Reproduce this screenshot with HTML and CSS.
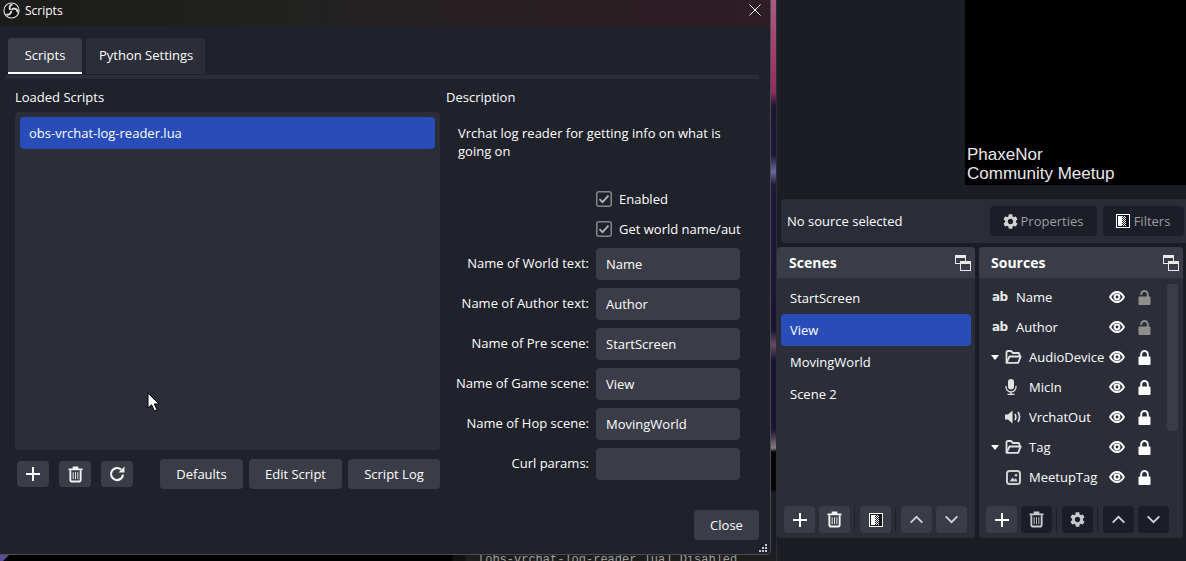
FILE: index.html

```html
<!DOCTYPE html>
<html lang="en">
<head>
    <meta charset="UTF-8">
    <title>Scripts</title>
    <link rel="stylesheet" href="styles.css">
</head>
<body>
    <svg class="sprite" width="0" height="0">
        <defs>
            <pattern id="dither" width="2" height="2" patternUnits="userSpaceOnUse">
                <rect width="2" height="2" fill="#15161c"/>
                <path d="M0 0h1v1H0zM1 1h1v1H1z" fill="#fff"/>
            </pattern>
        </defs>
        <symbol id="i-plus" viewBox="0 0 16 16"><path d="M8 1v14M1 8h14" fill="none" stroke="currentColor" stroke-width="2"/></symbol>
        <symbol id="i-trash" viewBox="0 0 16 17"><path d="M5 1h6M.5 3h15" fill="none" stroke="currentColor" stroke-width="2"/><path d="M2.5 4v10a2 2 0 0 0 2 2h7a2 2 0 0 0 2-2V4" fill="none" stroke="currentColor" stroke-width="2"/><path d="M5.5 6v7.5M8 6v7.5M10.5 6v7.5" fill="none" stroke="currentColor" stroke-width="1"/></symbol>
        <symbol id="i-reload" viewBox="0 0 16 16"><path d="M14 8.6a6 6 0 1 1-1.9-5" fill="none" stroke="currentColor" stroke-width="2.2"/><path d="M15.5 .5v6h-6z" fill="currentColor"/></symbol>
        <symbol id="i-mixer" viewBox="0 0 14 14"><rect x=".5" y=".5" width="13" height="13" fill="#15161c" stroke="#fff"/><rect x="2" y="2" width="4" height="10" fill="#fff"/><rect x="6" y="2" width="4" height="10" fill="url(#dither)"/></symbol>
        <symbol id="i-dock" viewBox="0 0 16 16"><rect x=".5" y=".5" width="10" height="8" fill="none" stroke="currentColor"/><path d="M0 1h11v2H0z" fill="currentColor"/><rect x="5.5" y="6.5" width="10" height="9" fill="#3a3d48" stroke="currentColor"/><path d="M5 7h11v2H5z" fill="currentColor"/></symbol>
        <symbol id="i-gear" viewBox="2 2 20 20"><path fill="currentColor" d="M19.14 12.94c.04-.3.06-.61.06-.94 0-.32-.02-.64-.07-.94l2.03-1.58c.18-.14.23-.41.12-.61l-1.92-3.32c-.12-.22-.37-.29-.59-.22l-2.39.96c-.5-.38-1.03-.7-1.62-.94l-.36-2.54c-.04-.24-.24-.41-.48-.41h-3.84c-.24 0-.43.17-.47.41l-.36 2.54c-.59.24-1.13.57-1.62.94l-2.39-.96c-.22-.08-.47 0-.59.22L2.74 8.87c-.12.21-.08.47.12.61l2.03 1.58c-.05.3-.09.63-.09.94s.02.64.07.94l-2.03 1.58c-.18.14-.23.41-.12.61l1.92 3.32c.12.22.37.29.59.22l2.39-.96c.5.38 1.03.7 1.62.94l.36 2.54c.05.24.24.41.48.41h3.84c.24 0 .44-.17.47-.41l.36-2.54c.59-.24 1.13-.56 1.62-.94l2.39.96c.22.08.47 0 .59-.22l1.92-3.32c.12-.22.07-.47-.12-.61l-2.01-1.58zM12 15.6c-1.98 0-3.6-1.62-3.6-3.6s1.62-3.6 3.6-3.6 3.6 1.62 3.6 3.6-1.62 3.6-3.6 3.6z"/></symbol>
        <symbol id="i-up" viewBox="0 0 16 10"><path d="M1.5 8.5L8 2l6.5 6.5" fill="none" stroke="currentColor" stroke-width="2"/></symbol>
        <symbol id="i-down" viewBox="0 0 16 10"><path d="M1.5 1.5L8 8l6.5-6.5" fill="none" stroke="currentColor" stroke-width="2"/></symbol>
        <symbol id="i-eye" viewBox="0 0 16 12"><path d="M1.1 6c2-3.4 4.4-5 6.9-5s4.900 1.600 6.900 5c-2 3.400-4.400 5-6.900 5s-4.900-1.600-6.900-5z" fill="none" stroke="currentColor" stroke-width="2"/><circle cx="8" cy="6" r="2.4" fill="none" stroke="currentColor" stroke-width="2"/></symbol>
        <symbol id="i-lock" viewBox="0 0 13 15"><path d="M3.200 7V4.300a3.300 3.300 0 0 1 6.600 0V7" fill="none" stroke="currentColor" stroke-width="1.900"/><rect x=".5" y="6.500" width="12" height="8.500" rx="1" fill="currentColor"/></symbol>
        <symbol id="i-unlock" viewBox="0 0 13 15"><path d="M9.800 7V4.300a3.300 3.300 0 0 0-6.600 0V5" fill="none" stroke="currentColor" stroke-width="1.900"/><rect x=".5" y="6.500" width="12" height="8.500" rx="1" fill="currentColor"/></symbol>
        <symbol id="i-folder" viewBox="0 0 17 14"><path d="M1.500 12.500V2.500a1.500 1.500 0 0 1 1.500-1.500h3l2 2h5a1.500 1.500 0 0 1 1.500 1.500V6" fill="none" stroke="currentColor" stroke-width="1.800"/><path d="M1.500 12.800L4.500 6.500h11.200l-2.600 6.300z" fill="none" stroke="currentColor" stroke-width="1.800" stroke-linejoin="round"/></symbol>
        <symbol id="i-caret" viewBox="0 0 8 5"><path d="M0 0h8L4 5z" fill="currentColor"/></symbol>
        <symbol id="i-mic" viewBox="0 0 12 16"><rect x="3" y="0" width="6" height="10.500" rx="3" fill="currentColor"/><path d="M1 7v1a5 5 0 0 0 10 0V7M6 13v2M2.500 15.300h7" fill="none" stroke="currentColor" stroke-width="1.300"/></symbol>
        <symbol id="i-speaker" viewBox="0 0 16 14"><path d="M0 4.500h3L7.500 .5v13L3 9.500H0z" fill="currentColor"/><path d="M10 4c1 1.800 1 4.200 0 6M13 2c1.800 3 1.800 7 0 10" fill="none" stroke="currentColor" stroke-width="1.600"/></symbol>
        <symbol id="i-image" viewBox="0 0 15 15"><rect x="1" y="1" width="13" height="13" rx="2.500" fill="none" stroke="currentColor" stroke-width="2"/><path d="M3.500 11.500l3-4 2 2 1.500-1.200 1.500 3.200z" fill="currentColor"/><circle cx="10" cy="5.200" r="1.300" fill="currentColor"/></symbol>
        <symbol id="i-check" viewBox="0 0 16 16"><rect x=".75" y=".75" width="14.500" height="14.500" rx="2" fill="none" stroke="#85868c" stroke-width="1.500"/><path d="M3.500 8.200l3 3 6-6.500" fill="none" stroke="#b4b5b9" stroke-width="1.800"/></symbol>
    </svg>

    <div class="log"><div class="log-line">[obs-vrchat-log-reader.lua] Disabled</div></div>

    <div class="main-window">
        <div class="preview">
            <div class="preview-text">PhaxeNor<br>Community Meetup</div>
        </div>
        <div class="context-bar">
            <span class="context-label">No source selected</span>
            <button class="context-btn props"><svg class="ic-gear"><use href="#i-gear"/></svg>Properties</button>
            <button class="context-btn filters"><svg class="ic-mixer"><use href="#i-mixer"/></svg>Filters</button>
        </div>
        <div class="docks">
            <section class="dock scenes">
                <header class="dock-head">Scenes<svg class="ic-dock"><use href="#i-dock"/></svg></header>
                <ul class="scene-list">
                    <li>StartScreen</li>
                    <li class="selected">View</li>
                    <li>MovingWorld</li>
                    <li>Scene 2</li>
                </ul>
                <div class="toolbar">
                    <button class="tool"><svg class="ic-plus"><use href="#i-plus"/></svg></button>
                    <button class="tool"><svg class="ic-trash"><use href="#i-trash"/></svg></button>
                    <span class="sep"></span>
                    <button class="tool"><svg class="ic-mixer"><use href="#i-mixer"/></svg></button>
                    <span class="sep"></span>
                    <button class="tool"><svg class="ic-chev"><use href="#i-up"/></svg></button>
                    <button class="tool"><svg class="ic-chev"><use href="#i-down"/></svg></button>
                </div>
            </section>
            <section class="dock sources">
                <header class="dock-head">Sources<svg class="ic-dock"><use href="#i-dock"/></svg></header>
                <div class="source-body">
                    <ul class="source-list">
                        <li class="top"><span class="ab">ab</span><span class="name">Name</span><svg class="ic-eye"><use href="#i-eye"/></svg><svg class="ic-lock soft"><use href="#i-unlock"/></svg></li>
                        <li class="top"><span class="ab">ab</span><span class="name">Author</span><svg class="ic-eye"><use href="#i-eye"/></svg><svg class="ic-lock soft"><use href="#i-unlock"/></svg></li>
                        <li class="group"><svg class="ic-caret"><use href="#i-caret"/></svg><svg class="ic-folder"><use href="#i-folder"/></svg><span class="name">AudioDevice</span><svg class="ic-eye"><use href="#i-eye"/></svg><svg class="ic-lock"><use href="#i-lock"/></svg></li>
                        <li class="child"><svg class="ic-mic"><use href="#i-mic"/></svg><span class="name">MicIn</span><svg class="ic-eye"><use href="#i-eye"/></svg><svg class="ic-lock"><use href="#i-lock"/></svg></li>
                        <li class="child"><svg class="ic-speaker"><use href="#i-speaker"/></svg><span class="name">VrchatOut</span><svg class="ic-eye"><use href="#i-eye"/></svg><svg class="ic-lock"><use href="#i-lock"/></svg></li>
                        <li class="group"><svg class="ic-caret"><use href="#i-caret"/></svg><svg class="ic-folder"><use href="#i-folder"/></svg><span class="name">Tag</span><svg class="ic-eye"><use href="#i-eye"/></svg><svg class="ic-lock"><use href="#i-lock"/></svg></li>
                        <li class="child"><svg class="ic-image"><use href="#i-image"/></svg><span class="name">MeetupTag</span><svg class="ic-eye"><use href="#i-eye"/></svg><svg class="ic-lock"><use href="#i-lock"/></svg></li>
                    </ul>
                    <div class="scrollbar"></div>
                </div>
                <div class="toolbar">
                    <button class="tool"><svg class="ic-plus"><use href="#i-plus"/></svg></button>
                    <button class="tool dark"><svg class="ic-trash"><use href="#i-trash"/></svg></button>
                    <span class="sep"></span>
                    <button class="tool dark"><svg class="ic-gear-lg"><use href="#i-gear"/></svg></button>
                    <span class="sep"></span>
                    <button class="tool dark"><svg class="ic-chev"><use href="#i-up"/></svg></button>
                    <button class="tool dark"><svg class="ic-chev"><use href="#i-down"/></svg></button>
                </div>
            </section>
        </div>
    </div>

    <div class="dialog">
        <div class="titlebar">
            <svg class="obs-logo" viewBox="0 0 18 18">
                <circle cx="9" cy="9" r="8" fill="#111" stroke="#e0e0e0" stroke-width="1.200"/>
                <path d="M10 2.600a3.400 3.400 0 0 0-2 5.800M15.200 11.200a3.400 3.400 0 0 0-6-2.900M3.600 13a3.400 3.400 0 0 0 5-3.500" fill="none" stroke="#e0e0e0" stroke-width="2"/>
            </svg>
            <span class="title">Scripts</span>
            <svg class="close-x" viewBox="0 0 12 12"><path d="M.5 .5l11 11M11.500 .5l-11 11" stroke="#fff" stroke-width="1" fill="none"/></svg>
        </div>

        <div class="tabs">
            <div class="tab active">Scripts</div>
            <div class="tab">Python Settings</div>
        </div>
        <div class="tab-line"></div>

        <div class="panes">
            <div class="left-pane">
                <div class="pane-label">Loaded Scripts</div>
                <div class="script-list">
                    <div class="script-item">obs-vrchat-log-reader.lua</div>
                </div>
                <div class="script-actions">
                    <button class="icon-btn"><svg class="ic-plus"><use href="#i-plus"/></svg></button>
                    <button class="icon-btn"><svg class="ic-trash"><use href="#i-trash"/></svg></button>
                    <button class="icon-btn"><svg class="ic-reload"><use href="#i-reload"/></svg></button>
                    <button class="text-btn defaults">Defaults</button>
                    <button class="text-btn edit">Edit Script</button>
                    <button class="text-btn log-btn">Script Log</button>
                </div>
            </div>
            <div class="right-pane">
                <div class="pane-label">Description</div>
                <p class="description">Vrchat log reader for getting info on what is going on</p>
                <div class="form">
                    <span></span>
                    <label class="check"><svg class="ic-check"><use href="#i-check"/></svg><span>Enabled</span></label>
                    <span></span>
                    <label class="check"><svg class="ic-check"><use href="#i-check"/></svg><span>Get world name/aut</span></label>
                    <label class="field-label">Name of World text:</label>
                    <div class="field">Name</div>
                    <label class="field-label">Name of Author text:</label>
                    <div class="field">Author</div>
                    <label class="field-label">Name of Pre scene:</label>
                    <div class="field">StartScreen</div>
                    <label class="field-label">Name of Game scene:</label>
                    <div class="field">View</div>
                    <label class="field-label">Name of Hop scene:</label>
                    <div class="field">MovingWorld</div>
                    <label class="field-label">Curl params:</label>
                    <div class="field"></div>
                </div>
            </div>
        </div>

        <div class="dialog-foot">
            <button class="text-btn close-btn">Close</button>
        </div>
        <svg class="grip" viewBox="0 0 8 8">
            <path d="M6 0h2v2H6zM3 3h2v2H3zM6 3h2v2H6zM0 6h2v2H0zM3 6h2v2H3zM6 6h2v2H6z" fill="#c9c9cc"/>
        </svg>
    </div>

    <svg class="cursor" viewBox="0 0 13 20">
        <path d="M1 1v15l3.600-3.200L7.400 19l2.600-1.200-2.700-5.800H12z" fill="#fff" stroke="#000" stroke-width="1"/>
    </svg>
</body>
</html>
```

FILE: styles.css

```css
* {
    box-sizing: border-box;
}
html, body {
    margin: 0;
    height: 100%;
}
body {
    position: relative;
    width: 1186px;
    height: 561px;
    overflow: hidden;
    font-family: "Open Sans", sans-serif;
    font-size: 13px;
    color: #fefefe;
    background: linear-gradient(180deg, #a85c85 0, #a23a6a 60px, #8e2f5e 92px, #1a1530 106px, #1c1836 155px, #6a6aa0 172px, #1c1836 185px, #1a1530 330px, #6a4a66 345px, #1a1530 360px, #1a1530 430px, #8d7a80 448px, #060606 452px, #060606 490px, #1b1d25 492px);
}
button {
    font: inherit;
    color: inherit;
    border: none;
    padding: 0;
}
ul {
    list-style: none;
    margin: 0;
    padding: 0;
}
svg {
    display: block;
    flex: none;
}
.sprite {
    position: absolute;
}

/* windows behind the dialog */
.log {
    position: absolute;
    left: 0;
    top: 555px;
    width: 776px;
    height: 6px;
    overflow: hidden;
    background: linear-gradient(135deg, #5b4b92 0, #5b4b92 6px, transparent 7px), linear-gradient(90deg, #000 452px, #111 453px, #111 465px, #1e1e1e 466px);
}
.log-line {
    margin: -2px 0 0 478px;
    font: 12px/14px "Liberation Mono", monospace;
    color: #a0a0a0;
    white-space: pre;
}
.main-window {
    position: absolute;
    left: 776px;
    top: 0;
    width: 410px;
    height: 561px;
    display: flex;
    flex-direction: column;
    background: #1b1d25;
    border-left: 1px solid #2c2e36;
}
.preview {
    height: 185px;
    margin-left: 188px;
    padding: 145px 0 0 2px;
    background: #000;
    flex: none;
}
.preview-text {
    font: 17px/19px "Liberation Sans", sans-serif;
    color: #e8e8e8;
    white-space: nowrap;
}
.context-bar {
    display: flex;
    align-items: center;
    height: 44px;
    margin: 14px 0 0 4px;
    padding: 0 2px 0 6px;
    background: #2a2d37;
    border-radius: 4px 0 0 4px;
}
.context-label {
    flex: 1;
}
.context-btn {
    display: flex;
    align-items: center;
    justify-content: center;
    height: 30px;
    background: #1c1e27;
    border-radius: 4px;
    color: #9a9ca3;
}
.props {
    width: 107px;
    gap: 3px;
    padding-right: 1px;
    margin-right: 6px;
}
.filters {
    width: 81px;
    gap: 4px;
    padding-right: 1px;
}
.ic-gear {
    width: 15px;
    height: 15px;
    color: #d2d2d2;
}
.ic-mixer {
    width: 14px;
    height: 14px;
}
.docks {
    display: flex;
    gap: 4px;
    height: 291px;
    margin-top: 4px;
}
.dock {
    display: flex;
    flex-direction: column;
    background: #2b2e38;
    border-radius: 4px;
}
.scenes {
    width: 198px;
}
.sources {
    width: 204px;
}
.dock-head {
    display: flex;
    align-items: center;
    justify-content: space-between;
    flex: none;
    height: 31px;
    padding: 0 4px 0 12px;
    background: #3a3d48;
    border-radius: 4px 4px 0 0;
    font-size: 14px;
    font-weight: 700;
}
.ic-dock {
    width: 16px;
    height: 16px;
    color: #e8e8e8;
}
.scene-list {
    flex: 1;
    padding: 4px;
}
.scene-list li {
    height: 32px;
    line-height: 32px;
    padding-left: 9px;
    border-radius: 4px;
}
.scene-list .selected {
    background: #284cb8;
}
.source-body {
    flex: 1;
    display: flex;
    gap: 2px;
    align-items: flex-start;
}
.source-list {
    width: 186px;
    padding-top: 4px;
}
.source-list li {
    display: flex;
    align-items: center;
    height: 30px;
}
.source-list .top {
    padding-left: 13px;
}
.source-list .group {
    padding-left: 12px;
}
.source-list .child {
    padding-left: 26px;
}
.name {
    flex: 1;
    white-space: nowrap;
    overflow: hidden;
}
.ab {
    width: 24px;
    font-family: "DejaVu Sans", sans-serif;
    font-size: 12px;
    font-weight: 700;
    letter-spacing: -0.5px;
    color: #e8e8e8;
}
.ic-eye {
    width: 16px;
    height: 12px;
    margin: 0 0 0 4px;
}
.ic-lock {
    width: 13px;
    height: 15px;
    margin: 0 14px 0 13px;
}
.soft {
    color: #8f8f8c;
}
.ic-caret {
    width: 8px;
    height: 5px;
    margin-right: 6px;
}
.ic-folder {
    width: 17px;
    height: 14px;
    margin-right: 7px;
    color: #e2e2e2;
}
.ic-mic {
    width: 12px;
    height: 16px;
    margin-right: 12px;
    color: #e2e2e2;
}
.ic-speaker {
    width: 16px;
    height: 14px;
    margin-right: 8px;
    color: #e2e2e2;
}
.ic-image {
    width: 15px;
    height: 15px;
    margin: 0 8px 0 1px;
    color: #cfcfcf;
}
.scrollbar {
    width: 11px;
    height: 147px;
    margin-top: 6px;
    background: #3a3d48;
    border-radius: 3px;
}
.toolbar {
    display: flex;
    align-items: center;
    gap: 4px;
    flex: none;
    padding: 0 0 5px 7px;
}
.tool {
    display: flex;
    align-items: center;
    justify-content: center;
    width: 31px;
    height: 27px;
    background: #3a3d48;
    border-radius: 4px;
}
.tool.dark {
    background: #1c1e27;
}
.sep {
    width: 1px;
    height: 23px;
    margin-right: 1px;
    background: #1c1e27;
}
.ic-plus {
    width: 16px;
    height: 16px;
    color: #fff;
}
.ic-trash {
    width: 15px;
    height: 17px;
    color: #f2f2f2;
}
.tool.dark .ic-trash {
    color: #c8cad2;
}
.ic-chev {
    width: 15px;
    height: 9px;
    color: #d2d4da;
}
.ic-gear-lg {
    width: 15px;
    height: 15px;
    color: #c8cad2;
}

/* scripts dialog */
.dialog {
    position: absolute;
    left: 0;
    top: 0;
    width: 771px;
    height: 555px;
    display: flex;
    flex-direction: column;
    background: #1f222b;
    border-right: 1px solid #4a4c55;
    border-bottom: 1px solid #4a4c55;
    border-bottom-right-radius: 5px;
}
.titlebar {
    display: flex;
    align-items: center;
    flex: none;
    height: 26px;
    padding: 0 9px 6px 3px;
    background: linear-gradient(90deg, #1c1c1b 0, #212120 300px, #2b1d23 640px, #2d1d25 100%);
    font-size: 12px;
}
.obs-logo {
    width: 17px;
    height: 17px;
    margin-right: 5px;
}
.title {
    flex: 1;
}
.close-x {
    width: 12px;
    height: 12px;
}
.tabs {
    display: flex;
    gap: 4px;
    flex: none;
    margin-top: 12px;
    padding-left: 8px;
}
.tab {
    width: 119px;
    height: 36px;
    padding-left: 13px;
    line-height: 35px;
    background: #2b2e38;
    border-radius: 4px 4px 0 0;
}
.tab.active {
    width: 74px;
    padding: 0;
    text-align: center;
    line-height: 34px;
    background: #3a3d48;
    border-bottom: 2px solid #fff;
}
.tab-line {
    flex: none;
    height: 4px;
    margin: 1px 11px 0 6px;
    background: #2b2e38;
}
.panes {
    display: flex;
    gap: 6px;
    flex: none;
    padding-left: 15px;
}
.pane-label {
    height: 33px;
    line-height: 36px;
}
.left-pane {
    width: 425px;
}
.script-list {
    height: 338px;
    padding: 5px;
    background: #2b2e38;
    border-radius: 4px;
}
.script-item {
    height: 32px;
    line-height: 32px;
    padding-left: 9px;
    background: #284cb8;
    border-radius: 4px;
}
.script-actions {
    display: flex;
    align-items: center;
    height: 30px;
    margin-top: 9px;
    padding-left: 2px;
}
.icon-btn {
    display: flex;
    align-items: center;
    justify-content: center;
    width: 32px;
    height: 26px;
    margin-right: 10px;
    background: #3a3d48;
    border-radius: 4px;
}
.ic-reload {
    width: 16px;
    height: 16px;
    color: #f2f2f2;
}
.text-btn {
    height: 30px;
    background: #3a3d48;
    border-radius: 4px;
    text-align: center;
}
.defaults {
    width: 83px;
    margin-left: 17px;
}
.edit {
    width: 93px;
    margin-left: 6px;
}
.log-btn {
    width: 92px;
    margin-left: 6px;
}
.right-pane {
    width: 295px;
}
.description {
    margin: 12px 0 0 12px;
    width: 280px;
    height: 36px;
    line-height: 18px;
}
.form {
    display: grid;
    grid-template-columns: 143px 144px;
    column-gap: 7px;
    row-gap: 8px;
    align-items: center;
    margin-top: 28px;
}
.check {
    display: flex;
    align-items: center;
    gap: 7px;
    height: 22px;
    white-space: nowrap;
    overflow: hidden;
    width: 146px;
}
.ic-check {
    width: 16px;
    height: 16px;
}
.field-label {
    padding-bottom: 2px;
    text-align: right;
    white-space: nowrap;
}
.field {
    height: 32px;
    line-height: 32px;
    padding-left: 10px;
    background: #3a3d48;
    border-radius: 4px;
}
.dialog-foot {
    display: flex;
    justify-content: flex-end;
    margin-top: auto;
    padding: 0 11px 14px 0;
}
.close-btn {
    width: 65px;
}
.grip {
    position: absolute;
    left: 759px;
    top: 544px;
    width: 8px;
    height: 8px;
}
.cursor {
    position: absolute;
    left: 147px;
    top: 392px;
    width: 13px;
    height: 20px;
}
```
